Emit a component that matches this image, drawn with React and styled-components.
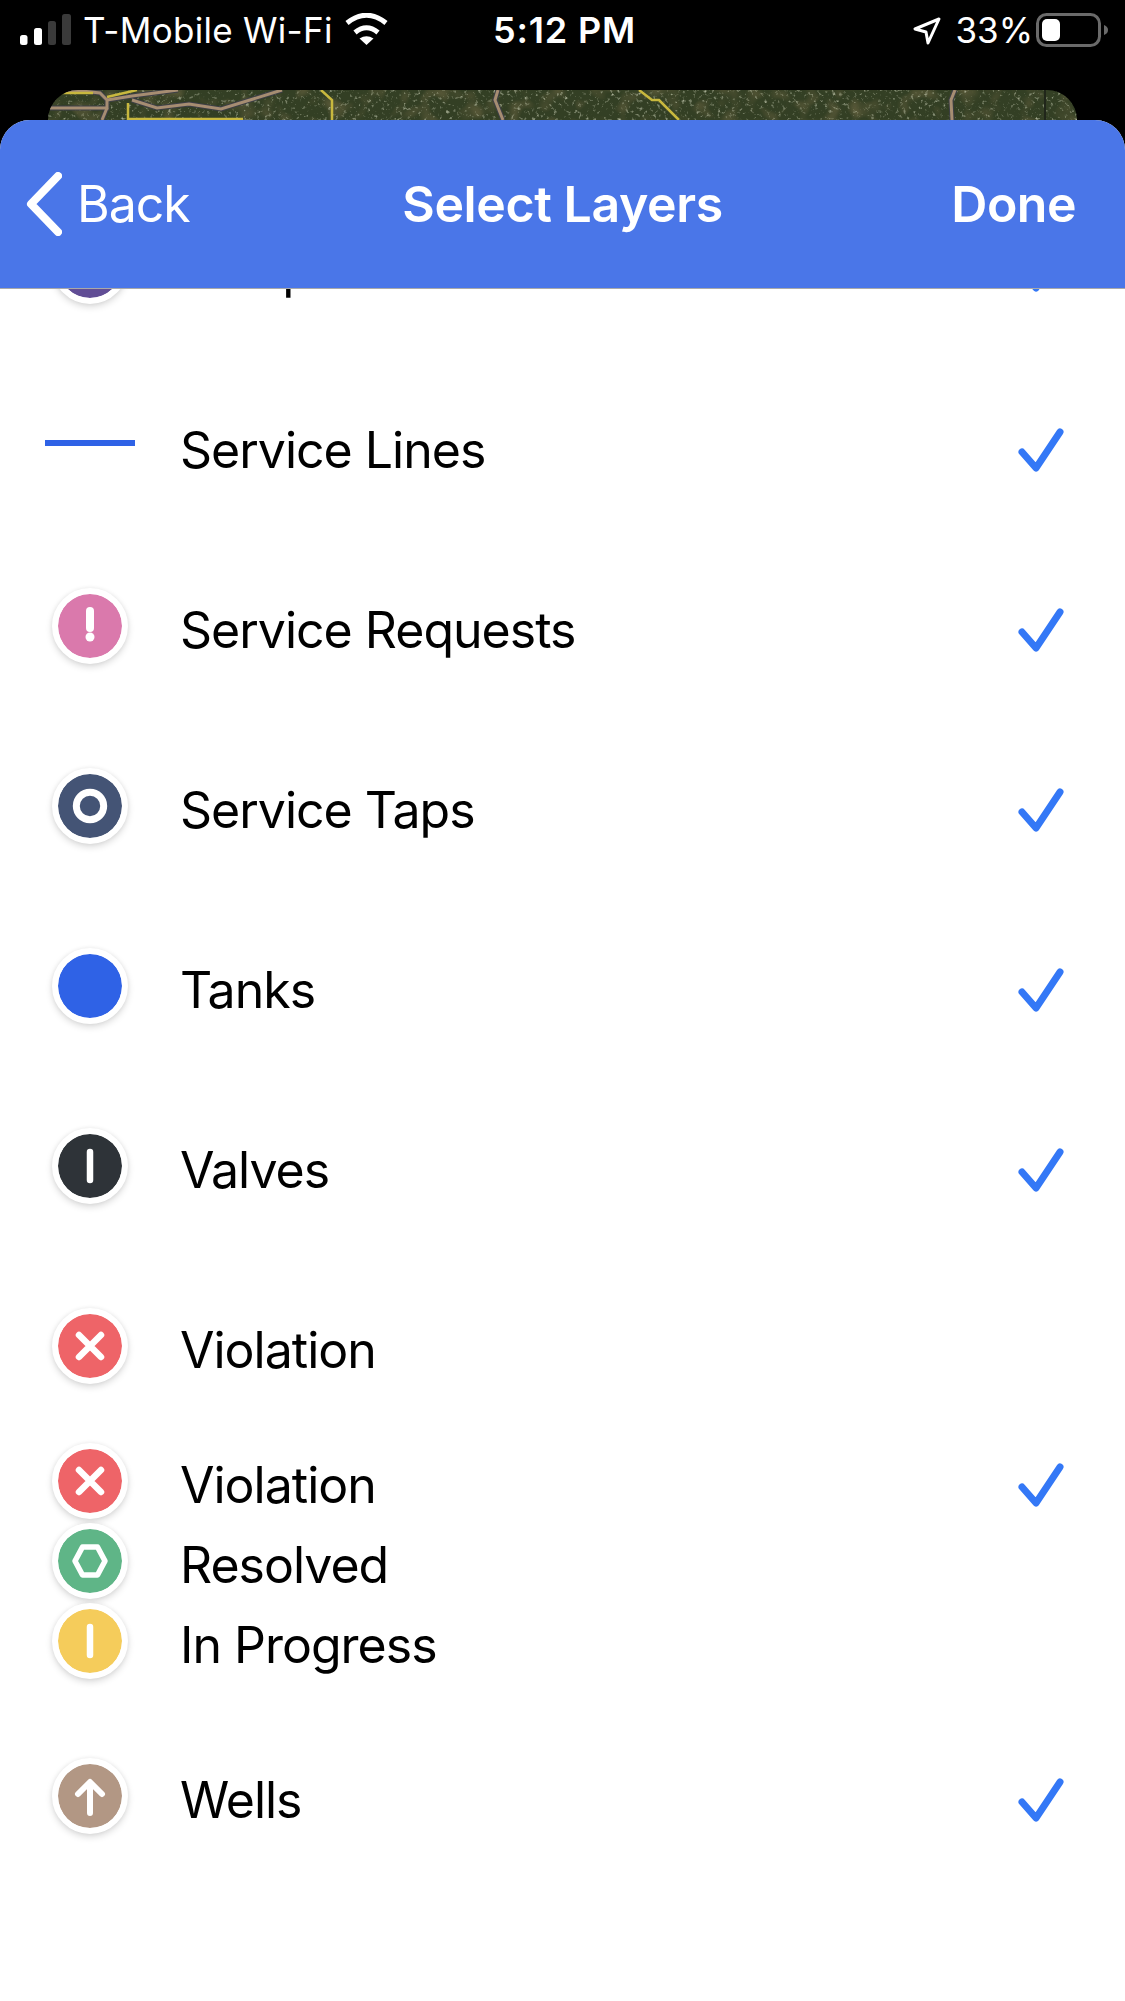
import styled, { createGlobalStyle } from "styled-components";

const GlobalStyle = createGlobalStyle`
  html, body {
    margin: 0;
    background: #000;
  }
  body {
    font-family: Inter, "Noto Sans", sans-serif;
    color: #000;
  }
`;

const Screen = styled.div`
  width: 1125px;
  height: 2001px;
  display: flex;
  flex-direction: column;
  overflow: hidden;
  background: #000;
`;

const StatusBar = styled.div`
  height: 90px;
  padding: 0 16px 0 20px;
  box-sizing: border-box;
  display: grid;
  grid-template-columns: 1fr auto 1fr;
  color: #fff;
  font-size: 35px;
  line-height: 61px;
`;

const StatusLeft = styled.div`
  display: flex;
  align-items: flex-start;
  gap: 11px;
  letter-spacing: 0.3px;
`;

const StatusRight = styled.div`
  display: flex;
  justify-content: flex-end;
  align-items: flex-start;
`;

const Time = styled.div`
  font-size: 36px;
  font-weight: 600;
  letter-spacing: 0.8px;
`;

const Bars = styled.svg`
  width: 52px;
  height: 32px;
  margin-top: 14px;
`;

const Wifi = styled.svg`
  width: 45px;
  height: 32px;
  margin-top: 13px;
`;

const Arrow = styled.svg`
  width: 30px;
  height: 28px;
  margin-top: 17px;
  margin-right: 13px;
`;

const Battery = styled.svg`
  width: 73px;
  height: 34px;
  margin-top: 13px;
  margin-left: 3px;
`;

const MapStrip = styled.svg`
  display: block;
  width: 1029px;
  height: 60px;
  margin: 0 0 -30px 48px;
  border-radius: 30px 30px 0 0;
`;

const Sheet = styled.div`
  position: relative;
  flex: 1;
  min-height: 0;
  display: flex;
  flex-direction: column;
  background: #fff;
  border-radius: 30px 30px 0 0;
  overflow: hidden;
`;

const Header = styled.header`
  position: relative;
  z-index: 1;
  flex: none;
  height: 169px;
  box-sizing: border-box;
  padding: 0 50px;
  display: grid;
  grid-template-columns: 1fr auto 1fr;
  align-items: center;
  background: #4a76e8;
  border-bottom: 1px solid #a9a9a9;
  color: #fff;
  font-size: 50px;
`;

const BackLink = styled.div`
  display: flex;
  align-items: center;
  gap: 15px;
  margin-left: -24px;
  letter-spacing: -1px;
`;

const Title = styled.div`
  font-weight: 600;
  letter-spacing: -0.4px;
`;

const Done = styled.div`
  font-weight: 600;
  letter-spacing: -0.5px;
  text-align: right;
  margin-right: -1px;
`;

const List = styled.div`
  flex: 1;
  min-height: 0;
  overflow: hidden;
`;

const Rows = styled.div`
  margin-top: -109px;
`;

const Row = styled.div`
  height: ${(p) => p.$height || 180}px;
  box-sizing: border-box;
  padding: 0 61px 0 45px;
  display: flex;
  align-items: center;
`;

const SubRows = styled.div`
  padding: 5px 0 25px;
`;

const IconCell = styled.div`
  flex: none;
  width: 90px;
  margin-bottom: 8px;
  display: flex;
  justify-content: center;
`;

const LineMark = styled.div`
  width: 90px;
  height: 6px;
  margin-bottom: 6px;
  background: #2f62e6;
`;

const Marker = styled.div`
  width: 76px;
  height: 76px;
  box-sizing: border-box;
  border: 6.5px solid #fff;
  border-radius: 50%;
  background: ${(p) => p.$color};
  background-clip: padding-box;
  box-shadow: 0 3px 7px rgba(0, 0, 0, 0.15), 0 0 4px rgba(0, 0, 0, 0.06);
  display: flex;
  align-items: center;
  justify-content: center;
`;

const Glyph = styled.svg`
  width: 50px;
  height: 50px;
  fill: none;
  stroke: #fff;
  stroke-linecap: round;
  stroke-linejoin: round;
`;

const Label = styled.div`
  flex: 1;
  margin-left: 45px;
  font-size: 50px;
  line-height: 60px;
  letter-spacing: -1px;
`;

const Check = styled.svg`
  flex: none;
  width: 46px;
  height: 44px;
  fill: none;
  stroke: #3478f6;
  stroke-width: 7;
  stroke-linecap: round;
  stroke-linejoin: round;
`;

const glyphs = {
  alert: (
    <>
      <path d="M0 -15V2" strokeWidth="8" />
      <circle cx="0" cy="11" r="4.5" fill="#fff" stroke="none" />
    </>
  ),
  ring: <circle r="13.7" strokeWidth="7" />,
  cross: <path d="M-11 -11L11 11M11 -11L-11 11" strokeWidth="6.5" />,
  hex: <path d="M-15 0L-7.5 -14H7.5L15 0L7.5 14H-7.5Z" strokeWidth="5.5" />,
  bar: <path d="M0 -14V14" strokeWidth="6.5" />,
  up: <path d="M0 17V-13M-12 -2L0 -14L12 -2" strokeWidth="6" />,
};

function RowIcon({ color, glyph }) {
  return (
    <IconCell>
      <Marker $color={color}>
        {glyph && <Glyph viewBox="-25 -25 50 50">{glyphs[glyph]}</Glyph>}
      </Marker>
    </IconCell>
  );
}

function CheckMark() {
  return (
    <Check viewBox="0 0 46 44">
      <path d="M4 24L18 40L42 4" />
    </Check>
  );
}

function LayerRow({ label, color, glyph, checked = true, line, height }) {
  return (
    <Row $height={height}>
      {line ? (
        <IconCell>
          <LineMark />
        </IconCell>
      ) : (
        <RowIcon color={color} glyph={glyph} />
      )}
      <Label>{label}</Label>
      {checked && <CheckMark />}
    </Row>
  );
}

// coordinates are in page pixels, the viewBox starts where the strip starts
function MapPicture() {
  const tan = [
    "M50 108H107V100L100 93L82 91H60",
    "M107 100L132 96L178 90",
    "M132 100L157 108L189 104L221 109L282 90",
    "M107 108L102 120",
    "M498 90L495 100L503 120",
    "M955 90L951 100L952 120",
  ];
  const yellow = [
    "M60 93H93",
    "M107 97L137 90",
    "M128 103V119H243",
    "M321 90L332 100V120",
    "M639 90L652 100H659L679 120",
  ];
  return (
    <MapStrip viewBox="48 90 1029 60">
      <defs>
        <filter id="foliage" x="0" y="0" width="100%" height="100%">
          <feTurbulence type="fractalNoise" baseFrequency="0.28" numOctaves="3" seed="7" />
          <feColorMatrix values="0 0 0 0 0.72  0 0 0 0 0.76  0 0 0 0 0.58  3 0 0 0 -1.75" />
        </filter>
        <filter id="patches" x="0" y="0" width="100%" height="100%">
          <feTurbulence type="fractalNoise" baseFrequency="0.05" numOctaves="2" seed="3" />
          <feColorMatrix values="0 0 0 0 0.3  0 0 0 0 0.22  0 0 0 0 0.1  0 2 0 0 -0.95" />
        </filter>
      </defs>
      <rect x="48" y="90" width="1029" height="60" fill="#333f24" />
      <rect x="48" y="90" width="1029" height="60" filter="url(#patches)" opacity="0.55" />
      <rect x="48" y="90" width="1029" height="60" filter="url(#foliage)" opacity="0.7" />
      <path d="M1045 90V120" stroke="#20261a" strokeWidth="2" />
      <g fill="none" stroke="#3d3f46" strokeWidth="5">
        {tan.map((d) => (
          <path key={d} d={d} />
        ))}
      </g>
      <g fill="none" stroke="#a68d72" strokeWidth="3">
        {tan.map((d) => (
          <path key={d} d={d} />
        ))}
      </g>
      <g fill="none" stroke="#c8b83e" strokeWidth="2.5">
        {yellow.map((d) => (
          <path key={d} d={d} />
        ))}
      </g>
    </MapStrip>
  );
}

export default function App() {
  return (
    <Screen>
      <GlobalStyle />
      <StatusBar>
        <StatusLeft>
          <Bars viewBox="0 0 52 32">
            <rect x="0" y="21" width="7.5" height="10" rx="2.5" fill="#fff" />
            <rect x="14" y="14" width="8" height="17" rx="2.5" fill="#fff" />
            <rect x="28" y="7" width="8" height="24" rx="2.5" fill="#3a3a3a" />
            <rect x="42" y="0" width="9" height="31" rx="2.5" fill="#3a3a3a" />
          </Bars>
          <span>T-Mobile Wi-Fi</span>
          <Wifi viewBox="0 0 45 32" fill="none" stroke="#fff" strokeWidth="5">
            <path d="M3 10Q22.5 -5.5 42 10" />
            <path d="M11 19.5Q22.5 10 34 19.5" />
            <path d="M15.5 25.5Q22.5 21 29.5 25.5L22.5 32Z" fill="#fff" stroke="none" />
          </Wifi>
        </StatusLeft>
        <Time>5:12 PM</Time>
        <StatusRight>
          <Arrow viewBox="0 0 30 28" fill="none" stroke="#fff" strokeWidth="3" strokeLinejoin="round">
            <path d="M27 2L3 12L14 15L16 26Z" />
          </Arrow>
          <span>33%</span>
          <Battery viewBox="0 0 73 34">
            <rect x="1.5" y="1.5" width="62" height="31" rx="9" fill="none" stroke="#6a6a6a" strokeWidth="3" />
            <rect x="6" y="6" width="18" height="22" rx="5" fill="#fff" />
            <path d="M68 12C71 13 72 15 72 17C72 19 71 21 68 22Z" fill="#6a6a6a" />
          </Battery>
        </StatusRight>
      </StatusBar>
      <MapPicture />
      <Sheet>
        <Header>
          <BackLink>
            <svg width="36" height="64" viewBox="0 0 36 64" fill="none" stroke="#fff" strokeWidth="8" strokeLinecap="round" strokeLinejoin="round">
              <path d="M32 4L5 32L32 60" />
            </svg>
            <span>Back</span>
          </BackLink>
          <Title>Select Layers</Title>
          <Done>Done</Done>
        </Header>
        <List>
          <Rows>
            <LayerRow label="Pump Stations" color="#614d95" />
            <LayerRow label="Service Lines" line />
            <LayerRow label="Service Requests" color="#da79ac" glyph="alert" />
            <LayerRow label="Service Taps" color="#445475" glyph="ring" />
            <LayerRow label="Tanks" color="#2f62e6" />
            <LayerRow label="Valves" color="#2e3338" glyph="bar" />
            <LayerRow label="Violation" color="#ee6468" glyph="cross" checked={false} />
            <SubRows>
              <LayerRow height={80} label="Violation" color="#ee6468" glyph="cross" />
              <LayerRow height={80} label="Resolved" color="#5fb587" glyph="hex" checked={false} />
              <LayerRow height={80} label="In Progress" color="#f5cc5b" glyph="bar" checked={false} />
            </SubRows>
            <LayerRow label="Wells" color="#b29784" glyph="up" />
          </Rows>
        </List>
      </Sheet>
    </Screen>
  );
}
